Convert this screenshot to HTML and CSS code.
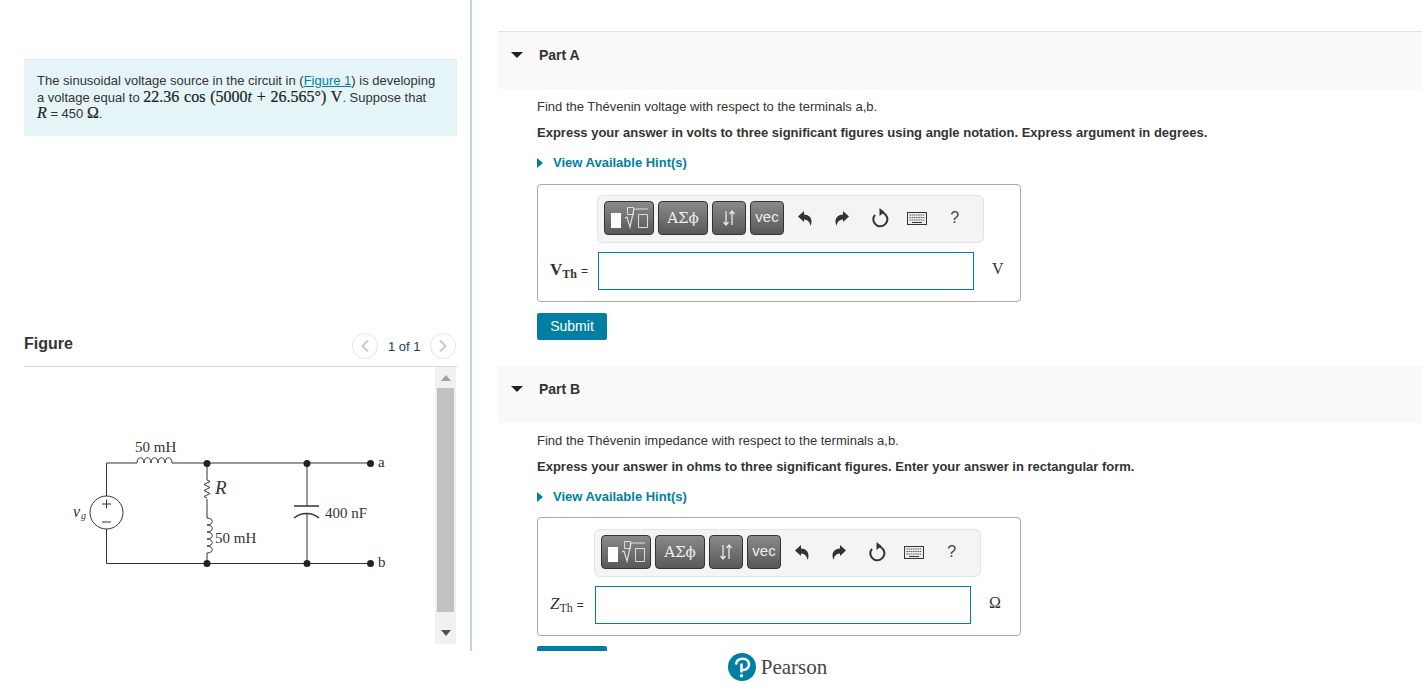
FILE: index.html
```html
<!DOCTYPE html>
<html lang="en">
<head>
    <meta charset="UTF-8">
    <title>Thevenin Equivalent</title>
    <link rel="stylesheet" href="styles.css">
</head>
<body>
    <div class="page">
        <div class="left-pane">
            <div class="intro">
                <p>The sinusoidal voltage source in the circuit in (<a href="#">Figure 1</a>) is developing a voltage equal to <span class="math">22.36 cos (5000<i>t</i> + 26.565°) V</span>. Suppose that<br><span class="math"><i>R</i></span> = 450 <span class="math">Ω</span>.</p>
            </div>
            <div class="figure-head">
                <h2>Figure</h2>
                <div class="pager">
                    <span class="page-btn">
                        <svg width="10" height="14" viewBox="0 0 10 14"><path d="M8 1.500 2.500 7 8 12.500" fill="none" stroke="#c4cdd4" stroke-width="2"/></svg>
                    </span>
                    <span class="page-count">1 of 1</span>
                    <span class="page-btn">
                        <svg width="10" height="14" viewBox="0 0 10 14"><path d="M2 1.500 7.500 7 2 12.500" fill="none" stroke="#c4cdd4" stroke-width="2"/></svg>
                    </span>
                </div>
            </div>
            <div class="figure-body">
                <svg class="circuit" width="412" height="276" viewBox="0 0 412 276">
                    <g fill="none" stroke="#333" stroke-width="1">
                        <!-- wires -->
                        <path d="M106.500 129V96H137M172 96H370M106.500 162V196.500H370M207 96V113M207 132V151M207 186V196M307 96V139M307 147V196"/>
                        <circle cx="106.500" cy="145.500" r="16.500"/>
                        <path d="M137 96c0-7 7-7 7 0c0-7 7-7 7 0c0-7 7-7 7 0c0-7 7-7 7 0c0-7 7-7 7 0"/>
                        <path d="M207 113l3 1.500-6 3 6 3-6 3 6 3-6 3 3 1.500"/>
                        <path d="M207 151c7 0 7 7 0 7c7 0 7 7 0 7c7 0 7 7 0 7c7 0 7 7 0 7c7 0 7 7 0 7"/>
                        <path d="M294 139H319" stroke-width="1.500"/>
                        <path d="M294 151c7-6 18-6 25 0" stroke-width="1.500"/>
                        <path d="M102 137h9M106.500 132.500v9M102 155h9"/>
                    </g>
                    <g fill="#222">
                        <circle cx="207" cy="96.500" r="3.500"/>
                        <circle cx="307" cy="96.500" r="3.500"/>
                        <circle cx="370.500" cy="96.500" r="3.500"/>
                        <circle cx="207" cy="196.500" r="3.500"/>
                        <circle cx="307" cy="196.500" r="3.500"/>
                        <circle cx="370.500" cy="196.500" r="3.500"/>
                    </g>
                    <g class="circuit-text">
                        <text x="135" y="85">50 mH</text>
                        <text x="215" y="127" class="circuit-big"><tspan font-style="italic">R</tspan></text>
                        <text x="215" y="176">50 mH</text>
                        <text x="325" y="151">400 nF</text>
                        <text x="378" y="100">a</text>
                        <text x="378" y="200">b</text>
                        <text x="73" y="150" class="circuit-v" font-style="italic">v</text>
                        <text x="81" y="152" class="circuit-small" font-style="italic">g</text>
                    </g>
                </svg>
                <div class="scrollbar">
                    <span class="arrow-up"></span>
                    <span class="thumb"></span>
                    <span class="arrow-down"></span>
                </div>
            </div>
        </div>

        <div class="right-pane">
            <div class="part part-a">
                <div class="part-head"><span class="caret"></span><h3>Part A</h3></div>
                <div class="part-body">
                    <p>Find the Thévenin voltage with respect to the terminals a,b.</p>
                    <p class="strong">Express your answer in volts to three significant figures using angle notation. Express argument in degrees.</p>
                    <a class="hint" href="#"><span class="hint-caret"></span>View Available Hint(s)</a>
                    <div class="answer-box">
                        <div class="toolbar">
                            <span class="tool tool-template">
                                <svg width="44" height="24" viewBox="0 0 44 24"><path d="M4 7h10v15H4z" fill="#fff"/><path d="M20.500 1.500h6v7h-6zM31.500 8.500h9v13h-9z" fill="none" stroke="#ddd"/><path d="M18 12l2 -1 3 10 4-18h14" fill="none" stroke="#ddd" stroke-width="1.200"/></svg>
                            </span>
                            <span class="tool tool-greek">ΑΣϕ</span>
                            <span class="tool tool-arrows">
                                <svg width="16" height="16" viewBox="0 0 16 16"><path d="M5 1v14M2.500 12 5 15l2.500-3M11 15V1M8.500 4 11 1l2.500 3" fill="none" stroke="#e8e8e8" stroke-width="1.300"/></svg>
                            </span>
                            <span class="tool tool-vec">vec</span>
                            <span class="action"><svg width="16" height="17" viewBox="0 0 16 17"><path d="M1 6.500 7 1v3.500c4.500 0 7.500 3 7.500 7 0 1.500-.3 3-1 4.500-.4-3.500-2.500-6.500-6.500-6.500V12z" fill="#333"/></svg></span>
                            <span class="action"><svg width="16" height="17" viewBox="0 0 16 17"><path d="M15 6.500 9 1v3.500c-4.500 0-7.500 3-7.500 7 0 1.500.3 3 1 4.500.4-3.500 2.500-6.500 6.500-6.500V12z" fill="#333"/></svg></span>
                            <span class="action"><svg width="18" height="20" viewBox="0 0 18 20"><path d="M9.500 4.300a7 7 0 1 1-5.500 2.500" fill="none" stroke="#333" stroke-width="2"/><path d="M8.500 0v8l5-4z" fill="#333"/></svg></span>
                            <span class="action"><svg width="20" height="13" viewBox="0 0 20 13"><rect x=".5" y=".5" width="19" height="12" fill="#eee" stroke="#333"/><path d="M2.500 3h15M2.500 5.500h15M2.500 8h15" stroke="#555" stroke-dasharray="1.500 .7"/><path d="M5 10.500h10" stroke="#333"/></svg></span>
                            <span class="action action-help">?</span>
                        </div>
                        <span class="var-label"><b class="math-var">V<sub>Th</sub></b><span class="equals">=</span></span>
                        <span class="answer-input"></span>
                        <span class="unit">V</span>
                    </div>
                    <span class="btn-submit">Submit</span>
                </div>
            </div>
            <div class="part part-b">
                <div class="part-head"><span class="caret"></span><h3>Part B</h3></div>
                <div class="part-body">
                    <p>Find the Thévenin impedance with respect to the terminals a,b.</p>
                    <p class="strong">Express your answer in ohms to three significant figures. Enter your answer in rectangular form.</p>
                    <a class="hint" href="#"><span class="hint-caret"></span>View Available Hint(s)</a>
                    <div class="answer-box answer-box-b">
                        <div class="toolbar">
                            <span class="tool tool-template">
                                <svg width="44" height="24" viewBox="0 0 44 24"><path d="M4 7h10v15H4z" fill="#fff"/><path d="M20.500 1.500h6v7h-6zM31.500 8.500h9v13h-9z" fill="none" stroke="#ddd"/><path d="M18 12l2 -1 3 10 4-18h14" fill="none" stroke="#ddd" stroke-width="1.200"/></svg>
                            </span>
                            <span class="tool tool-greek">ΑΣϕ</span>
                            <span class="tool tool-arrows">
                                <svg width="16" height="16" viewBox="0 0 16 16"><path d="M5 1v14M2.500 12 5 15l2.500-3M11 15V1M8.500 4 11 1l2.500 3" fill="none" stroke="#e8e8e8" stroke-width="1.300"/></svg>
                            </span>
                            <span class="tool tool-vec">vec</span>
                            <span class="action"><svg width="16" height="17" viewBox="0 0 16 17"><path d="M1 6.500 7 1v3.500c4.500 0 7.500 3 7.500 7 0 1.500-.3 3-1 4.500-.4-3.500-2.500-6.500-6.500-6.500V12z" fill="#333"/></svg></span>
                            <span class="action"><svg width="16" height="17" viewBox="0 0 16 17"><path d="M15 6.500 9 1v3.500c-4.500 0-7.500 3-7.500 7 0 1.500.3 3 1 4.500.4-3.500 2.500-6.500 6.500-6.500V12z" fill="#333"/></svg></span>
                            <span class="action"><svg width="18" height="20" viewBox="0 0 18 20"><path d="M9.500 4.300a7 7 0 1 1-5.500 2.500" fill="none" stroke="#333" stroke-width="2"/><path d="M8.500 0v8l5-4z" fill="#333"/></svg></span>
                            <span class="action"><svg width="20" height="13" viewBox="0 0 20 13"><rect x=".5" y=".5" width="19" height="12" fill="#eee" stroke="#333"/><path d="M2.500 3h15M2.500 5.500h15M2.500 8h15" stroke="#555" stroke-dasharray="1.500 .7"/><path d="M5 10.500h10" stroke="#333"/></svg></span>
                            <span class="action action-help">?</span>
                        </div>
                        <span class="var-label"><i class="math-var-i">Z<sub>Th</sub></i><span class="equals">=</span></span>
                        <span class="answer-input"></span>
                        <span class="unit">Ω</span>
                    </div>
                    <span class="btn-submit">Submit</span>
                </div>
            </div>
        </div>
    </div>
    <div class="footer">
        <svg width="28" height="28" viewBox="0 0 28 28">
            <circle cx="14" cy="14" r="14" fill="#007fa3"/>
            <path d="M8 11.500C8.500 7.500 11 5.800 14.500 5.800C18.500 5.800 21 8.500 21 11.500C21 14.500 18.500 17 15 17M13.500 10.500V19.500" fill="none" stroke="#fff" stroke-width="2.600"/>
            <circle cx="13.500" cy="22.800" r="1.700" fill="#fff"/>
        </svg>
        <span class="brand">Pearson</span>
    </div>
</body>
</html>
```

FILE: styles.css
```css
* {
    margin: 0;
    padding: 0;
    box-sizing: border-box;
}

body {
    font-family: "Liberation Sans", Arial, sans-serif;
    font-size: 13px;
    color: #333;
    background: white;
    height: 685px;
    overflow: hidden;
}

.page {
    display: flex;
    height: 651px;
    overflow: hidden;
}

.left-pane {
    width: 472px;
    flex: none;
    padding: 59px 13px 0 24px;
    border-right: 2px solid #c3d3e3;
    display: flex;
    flex-direction: column;
}

.intro {
    width: 433px;
    height: 77px;
    padding: 13px 13px;
    background: #e5f5f7;
    border-top: 1px solid #e0e6e8;
    line-height: 16.500px;
}

.intro a {
    color: #007fa3;
}

.math {
    font-family: "Liberation Serif", serif;
    font-size: 16px;
    line-height: 14px;
    word-spacing: 0.800px;
    color: #222;
    -webkit-text-stroke: 0.2px #222;
}

.figure-head {
    width: 433px;
    height: 54px;
    margin-top: 177px;
    padding: 0 1px 7px 0;
    display: flex;
    align-items: flex-end;
    justify-content: space-between;
    border-bottom: 1px solid #d9d9d9;
}

.figure-head h2 {
    font-size: 16px;
    color: #333;
    line-height: 18px;
    padding-bottom: 6px;
}

.pager {
    display: flex;
    align-items: center;
    gap: 9.500px;
}

.page-btn {
    width: 26px;
    height: 26px;
    border: 1.500px solid #e6e6e6;
    border-radius: 50%;
    display: flex;
    align-items: center;
    justify-content: center;
}

.page-count {
    color: #1d3c5a;
    padding-top: 1px;
}

.figure-body {
    width: 433px;
    height: 285px;
    display: flex;
}

.circuit {
    flex: none;
    margin-left: -24px;
}

.circuit-text text {
    font-family: "Liberation Serif", serif;
    font-size: 15px;
    fill: #333;
}

.circuit-text .circuit-big {
    font-size: 19px;
}

.circuit-text .circuit-v {
    font-size: 16px;
}

.circuit-text .circuit-small {
    font-size: 10px;
}

.scrollbar {
    width: 21px;
    height: 277px;
    flex: none;
    margin-left: 23px;
    background: #f1f1f1;
    display: flex;
    flex-direction: column;
    align-items: center;
}

.thumb {
    width: 17px;
    height: 224px;
    flex: none;
    background: #c1c1c1;
}

.arrow-up {
    margin: 8px 0 7px;
    border: 5px solid transparent;
    border-top: 0;
    border-bottom: 6px solid #a3a3a3;
}

.arrow-down {
    margin-top: 18px;
    border: 5px solid transparent;
    border-bottom: 0;
    border-top: 6px solid #505050;
}

.right-pane {
    flex: 1;
    padding: 31px 0 0 26px;
    min-width: 0;
}

.part-head {
    height: 57px;
    background: #f9f9f9;
    display: flex;
    align-items: center;
    padding: 0 0 12px 13px;
}

.part-a .part-head {
    height: 58px;
    border-top: 1px solid #e0e0e0;
}

.caret {
    border: 6px solid transparent;
    border-bottom: 0;
    border-top: 6px solid #222;
}

.part-head h3 {
    font-size: 14px;
    color: #333;
    margin-left: 16px;
}

.part-body {
    padding: 10px 0 0 39px;
}

.part-body p {
    line-height: 16px;
    margin-bottom: 10px;
}

.part-body .strong {
    font-weight: bold;
    margin-bottom: 14px;
}

.hint {
    display: flex;
    align-items: center;
    font-weight: bold;
    color: #007fa3;
    text-decoration: none;
    line-height: 16px;
    margin-bottom: 13px;
}

.hint-caret {
    border: 5px solid transparent;
    border-right: 0;
    border-left: 6px solid #007fa3;
    margin-right: 10px;
}

.answer-box {
    width: 484px;
    height: 118px;
    border: 1px solid #a9a9a9;
    border-radius: 4px;
    display: grid;
    grid-template-columns: 60px 376px 1fr;
    grid-template-rows: 48px 38px;
    row-gap: 9px;
    padding-top: 10px;
}

.answer-box-b {
    grid-template-columns: 57px 376px 1fr;
    padding-top: 11px;
    height: 119px;
    margin-top: -1px;
}

.toolbar {
    grid-column: 2 / 4;
    grid-row: 1;
    width: 387px;
    margin-left: -1px;
    background: #f4f4f4;
    border: 1px solid #e3e3e3;
    border-radius: 6px;
    display: flex;
    align-items: center;
    padding: 0 0 2px 6px;
    gap: 4px;
}

.tool {
    height: 34px;
    background: linear-gradient(#8a8a8a, #585858);
    border: 1px solid #333;
    border-radius: 4px;
    color: #eee;
    display: flex;
    align-items: center;
    justify-content: center;
}

.tool-template { width: 50px; }
.tool-greek { width: 50px; font-family: "DejaVu Serif", "Liberation Serif", serif; font-size: 15px; }
.tool-arrows { width: 34px; }
.tool-vec { width: 34px; font-size: 15px; padding-bottom: 3px; }

.action {
    width: 33.500px;
    display: flex;
    justify-content: center;
    align-items: center;
}

.action-help {
    font-size: 16px;
    color: #444;
}

.var-label {
    grid-column: 1;
    grid-row: 2;
    padding-left: 12px;
    line-height: 36px;
    white-space: nowrap;
}

.equals {
    font-size: 12px;
    margin-left: 4px;
}

.math-var, .math-var-i {
    font-family: "Liberation Serif", serif;
    font-size: 17px;
}

.math-var-i {
    font-style: italic;
}

.var-label sub {
    font-size: 12px;
    line-height: 0;
    vertical-align: -3px;
    font-style: normal;
    font-weight: bold;
}

.math-var-i sub {
    font-weight: normal;
}

.answer-input {
    grid-column: 2;
    grid-row: 2;
    border: 1px solid #007fa3;
    background: white;
}

.unit {
    grid-column: 3;
    grid-row: 2;
    font-family: "Liberation Serif", serif;
    font-size: 16px;
    line-height: 34px;
    padding-left: 18px;
}

.btn-submit {
    display: block;
    width: 70px;
    height: 27px;
    margin-top: 11px;
    margin-bottom: 26px;
    background: #007fa3;
    border-radius: 2px;
    color: white;
    font-size: 14px;
    text-align: center;
    line-height: 27px;
}

.answer-box-b + .btn-submit {
    margin-top: 10px;
}

.footer {
    height: 32px;
    display: flex;
    align-items: center;
    justify-content: center;
    gap: 5px;
    margin-left: 133px;
}

.brand {
    font-family: "Liberation Serif", serif;
    font-size: 21px;
    color: #444;
}
```
